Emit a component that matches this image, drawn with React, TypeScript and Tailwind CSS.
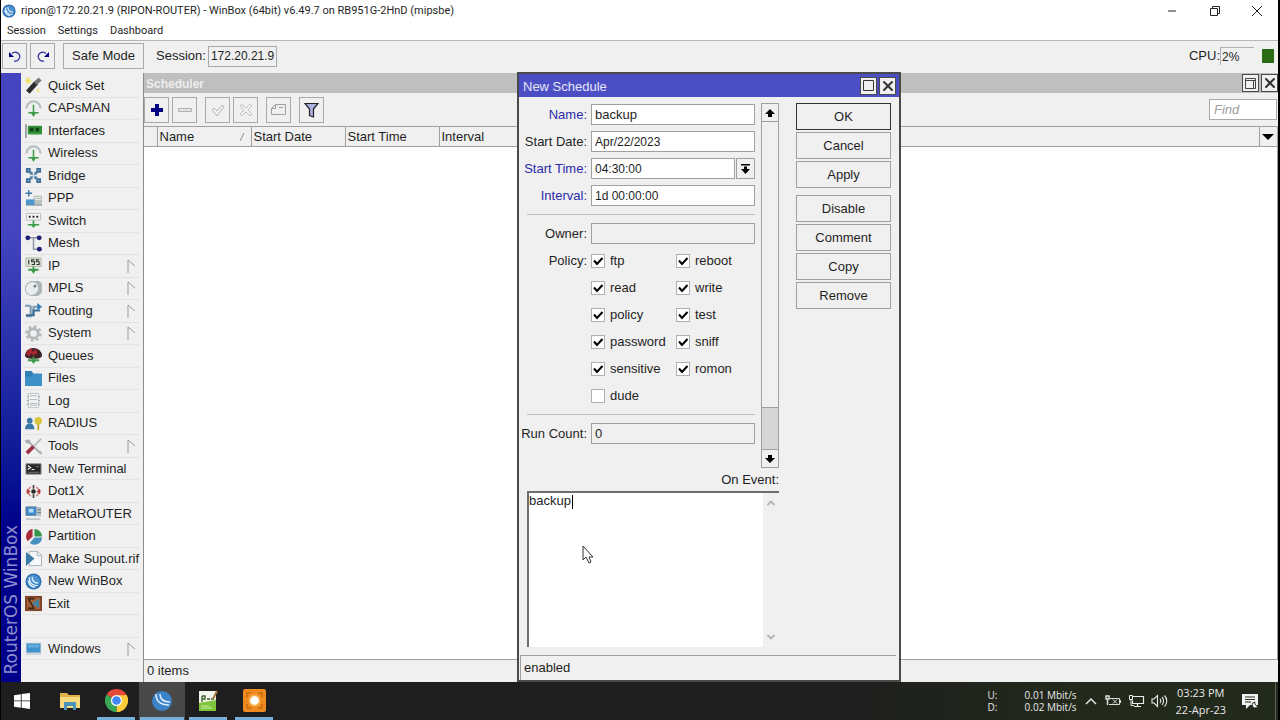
import type { ReactNode } from 'react';
import { ChevronDown, ChevronUp, Minus, X } from 'lucide-react';

const antenna = (
  <>
    <path d="M1.500 9a7.500 7.500 0 0 1 15 0" fill="none" stroke="#b9c0c4" strokeWidth="2.400" />
    <path d="M9 5v11M3.500 13.500h11" stroke="#3d9c47" strokeWidth="1.600" />
    <path d="M6 13l3 5 3-5z" fill="#3d9c47" />
  </>
);

const winboxBall = (
  <>
    <circle cx="9" cy="9" r="8.500" fill="#2f6fb0" />
    <circle cx="9" cy="9" r="6.800" fill="#4c92d2" />
    <path d="M4.500 4.500c0 6 3 9 9 9M7.500 4c0 4 2 6.500 6.500 6.800M3.500 8c.8 4 3 6.500 7 7" fill="none" stroke="#e8f3fc" strokeWidth="1.300" />
  </>
);

const icons: Record<string, ReactNode> = {
  'Quick Set': (
    <>
      <path d="M3 0v8M0 4h7M1 1l5 6M6 1L1 7" stroke="#ecdf4b" strokeWidth="1" />
      <path d="M3 16L12 6" stroke="#2c2c2c" strokeWidth="5" />
      <path d="M11 7l5-5" stroke="#777" strokeWidth="4.500" />
      <path d="M12 14l3 2M14 12v4" stroke="#ecdf4b" />
    </>
  ),
  CAPsMAN: antenna,
  Interfaces: (
    <>
      <path d="M1 2v15" stroke="#9aa29a" strokeWidth="2" />
      <path d="M3 4h15v9H3z" fill="#2f8f35" />
      <path d="M5 6h4v4H5zM11 6h4v4h-4z" fill="#12461a" />
      <path d="M5 13h10" stroke="#79c27c" strokeWidth="1" />
    </>
  ),
  Wireless: antenna,
  Bridge: (
    <>
      <path d="M2 2l14 14M16 2L2 16" stroke="#86a9c4" strokeWidth="2" />
      <path d="M1 1h5v5H1zM12 1h5v5h-5zM1 12h5v5H1zM12 12h5v5h-5z" fill="#3a6d98" />
      <path d="M5 5h3v3H5zM10 5h3v3h-3zM5 10h3v3H5zM10 10h3v3h-3z" fill="#4d81ab" />
      <path d="M3 3h1v1H3zM14 3h1v1h-1zM3 14h1v1H3zM14 14h1v1h-1zM8 8h2v2H8z" fill="#efefef" />
    </>
  ),
  PPP: (
    <>
      <path d="M4 0v7M.500 3.500h7" stroke="#3f78a5" strokeWidth="1.500" />
      <path d="M9 6h9v10H9z" fill="#b9c3ba" />
      <path d="M10 8h7M10 10h7" stroke="#e6eae6" />
      <path d="M1 10h9v6H1z" fill="#4b97d0" />
      <path d="M1 16h17" stroke="#7d8b95" />
    </>
  ),
  Switch: (
    <>
      <path d="M1.500 1.500h15v7h-15z" fill="#f7f7f7" stroke="#b7bdc0" />
      <path d="M4 5h2M8 5h2M12 5h2" stroke="#222" strokeWidth="2" />
      <path d="M9 9v7M3 13.500h12" stroke="#3d9c47" strokeWidth="1.800" />
      <path d="M6 13l3 4 3-4z" fill="#3d9c47" />
    </>
  ),
  Mesh: (
    <>
      <path d="M3 3h13M9 3v12h6" fill="none" stroke="#8e95a5" strokeWidth="1.600" />
      <g fill="#1c1f74">
        <circle cx="3" cy="3" r="2.600" />
        <circle cx="15" cy="3" r="2.600" />
        <circle cx="15.200" cy="15" r="2.600" />
      </g>
    </>
  ),
  IP: (
    <>
      <path d="M1 1h16v9H1z" fill="#e3ead9" stroke="#aab3a5" />
      <path d="M4 3v5M10 3H7v2h3v3H7M15 3h-3v2h3v3h-3" fill="none" stroke="#333" strokeWidth="1.200" />
      <path d="M9 10v6M3.500 13.500h11" stroke="#3d9c47" strokeWidth="2" />
      <path d="M6 13l3 5 3-5z" fill="#3d9c47" />
    </>
  ),
  MPLS: (
    <>
      <path d="M6 1h9l3 3v9l-4 4H6z" fill="#aab6b9" />
      <ellipse cx="7.500" cy="9" rx="7" ry="7.500" fill="#e8edee" stroke="#a8b2b5" transform="rotate(25 7.500 9)" />
      <circle cx="10.500" cy="6.500" r="1.500" fill="#6f7c80" />
    </>
  ),
  Routing: (
    <>
      <path d="M0 4h6M6 4v11H1M9 15V5h7" fill="none" stroke="#7a9aae" strokeWidth="2.200" />
      <path d="M1 14h8V9h7" fill="none" stroke="#3c6e95" strokeWidth="2.200" />
      <path d="M13 1l5 4-5 4z" fill="#2f7fb8" />
    </>
  ),
  System: (
    <>
      <circle cx="9" cy="9" r="5" fill="none" stroke="#b4b9bb" strokeWidth="3" />
      <circle cx="9" cy="9" r="7.500" fill="none" stroke="#b4b9bb" strokeWidth="2.500" strokeDasharray="3 2.890" />
    </>
  ),
  Queues: (
    <>
      <path d="M0 9a9 8 0 0 1 18 0c0 2-2 3.500-9 3.500S0 11 0 9z" fill="#3c2426" />
      <path d="M1 7c1-3 3-5 6-6l1 4 4-3 1 5-4 2-2-2-3 3z" fill="#a92732" />
      <path d="M9 10v6M3 14h12" stroke="#3d9c47" strokeWidth="2" />
      <path d="M6 14l3 4 3-4z" fill="#3d9c47" />
    </>
  ),
  Files: (
    <>
      <path d="M0 1h7l2 3h9v13H0z" fill="#2d7fb5" />
      <path d="M0 7h6l3-3h9v13H0z" fill="#3d91c6" />
    </>
  ),
  Log: (
    <>
      <path d="M3.500 1.500h11v15h-11z" fill="#f3f5f5" stroke="#bcc3c5" />
      <path d="M5 4h8M5 8h8M5 12h8M5 14h8" stroke="#a9b3b7" />
      <path d="M2 5h2M2 9h2M2 13h2M14 5h2M14 9h2M14 13h2" stroke="#9ba4a8" />
    </>
  ),
  RADIUS: (
    <>
      <circle cx="5" cy="6" r="3" fill="#3a78a6" />
      <path d="M0 15c0-4 2-6 5-6s5 2 5 6z" fill="#3a78a6" />
      <circle cx="14" cy="6" r="4" fill="#d9c63c" />
      <path d="M13 9h2v7h-2z" fill="#c1ac2c" />
    </>
  ),
  Tools: (
    <>
      <path d="M2 2l14 14" stroke="#a8adb0" strokeWidth="2.200" />
      <path d="M0 3l3 2 2-3M15 14l3 3" stroke="#a8adb0" strokeWidth="2" fill="none" />
      <path d="M17 1l-8 8" stroke="#b4b9bb" strokeWidth="1.800" />
      <path d="M9 9l-7 7" stroke="#a12f45" strokeWidth="4" />
    </>
  ),
  'New Terminal': (
    <>
      <path d="M1 4h16v11H1z" fill="#262626" stroke="#8d8d8d" />
      <path d="M3 6l3 2-3 2M7 10h3" fill="none" stroke="#fff" strokeWidth="1.200" />
      <path d="M3 13h12M11 7h4" stroke="#777" />
    </>
  ),
  Dot1X: (
    <>
      <path d="M6 4L2 9l4 5M12 4l4 5-4 5" fill="none" stroke="#d88b8b" strokeWidth="1.800" />
      <path d="M2 6l4 3-4 3zM16 6l-4 3 4 3z" fill="#b23b3b" />
      <circle cx="9" cy="9" r="2.400" fill="#252525" />
      <path d="M9 2v4M9 12v4" stroke="#444" strokeWidth="1.800" />
    </>
  ),
  MetaROUTER: (
    <>
      <path d="M1 2h11v9H1z" fill="#3a8bd0" stroke="#6e808e" />
      <path d="M4 4h5v4H4z" fill="#b5dbf5" />
      <path d="M12 2h5v10h-5z" fill="#b5c2ca" />
      <path d="M13 5h4M13 8h4" stroke="#55778e" />
      <path d="M1 15h15" stroke="#bec5c8" strokeWidth="2" />
    </>
  ),
  Partition: (
    <>
      <path d="M8 1v8l-5 5A8 8 0 0 1 8 1z" fill="#a72c3a" />
      <path d="M10 1a8 8 0 0 1 8 8h-8z" fill="#35964a" />
      <path d="M10 10h8a8 8 0 0 1-13 6z" fill="#4790c4" />
    </>
  ),
  'Make Supout.rif': (
    <>
      <path d="M4.500 1.500h9l4 4v11h-13z" fill="#f5f7f8" stroke="#a4b0b5" />
      <path d="M13 2v4h4" fill="none" stroke="#a4b0b5" />
      <path d="M1 2l9 7-9 8z" fill="#3a7ba9" />
    </>
  ),
  'New WinBox': winboxBall,
  Exit: (
    <>
      <path d="M0 1h18v16H0z" fill="#7d4426" />
      <path d="M2 3h14v12H2z" fill="#a85e35" />
      <path d="M3 4h7M3 14h7M4 5l5 8" stroke="#3b2418" strokeWidth="1.500" />
      <path d="M7 9l8-5v10z" fill="#41839c" />
    </>
  ),
  Windows: (
    <>
      <path d="M1.500 3.500h15v10h-15z" fill="#3f93cc" stroke="#8fb4cb" />
      <path d="M3 5h12v3H3z" fill="#64addc" />
      <path d="M1 15h16" stroke="#c2c8cb" />
    </>
  ),
};

const menuItems = [
  { name: 'Quick Set' },
  { name: 'CAPsMAN' },
  { name: 'Interfaces' },
  { name: 'Wireless' },
  { name: 'Bridge' },
  { name: 'PPP' },
  { name: 'Switch' },
  { name: 'Mesh' },
  { name: 'IP', sub: true },
  { name: 'MPLS', sub: true },
  { name: 'Routing', sub: true },
  { name: 'System', sub: true },
  { name: 'Queues' },
  { name: 'Files' },
  { name: 'Log' },
  { name: 'RADIUS' },
  { name: 'Tools', sub: true },
  { name: 'New Terminal' },
  { name: 'Dot1X' },
  { name: 'MetaROUTER' },
  { name: 'Partition' },
  { name: 'Make Supout.rif' },
  { name: 'New WinBox' },
  { name: 'Exit' },
  { name: '' },
  { name: 'Windows', sub: true },
];

const policies = [
  ['ftp', 'reboot'],
  ['read', 'write'],
  ['policy', 'test'],
  ['password', 'sniff'],
  ['sensitive', 'romon'],
  ['dude'],
];

function Sidebar() {
  return (
    <nav className="flex shrink-0 bg-[#f0f0f0] border-r border-[#8c8c8c]">
      <div className="w-5 bg-linear-to-b from-[#4545c0] from-25% to-[#00008a] to-75% flex items-end justify-center pb-2">
        <span className="[writing-mode:vertical-rl] rotate-180 font-['DejaVu_Sans'] text-[17px] leading-5 text-[#8d8dcf] whitespace-nowrap">
          RouterOS WinBox
        </span>
      </div>
      <ul className="w-[122px] pl-0.5 pr-1 pt-0.5 flex flex-col">
        {menuItems.map((item, i) => (
          <li key={i} className="flex-1 min-h-0 border-b border-[#e2e2e2]">
            {item.name && (
              <button className="w-full h-full flex items-center gap-1.5 pl-0.5 text-left whitespace-nowrap">
                <svg viewBox="0 0 18 18" className="w-[17px] h-[17px] shrink-0">{icons[item.name]}</svg>
                <span className="flex-1">{item.name}</span>
                {item.sub && (
                  <svg viewBox="0 0 8 14" className="w-2 h-3.5 mr-1" fill="none">
                    <path d="M1 14V1l7 6" stroke="#9b9b9b" />
                  </svg>
                )}
              </button>
            )}
          </li>
        ))}
        <li className="flex-1" />
      </ul>
    </nav>
  );
}

function ToolButton({ label, className = '', children }: { label: string; className?: string; children: ReactNode }) {
  return (
    <button aria-label={label} className={`w-[25px] h-[26px] border border-[#a9a9a9] flex items-center justify-center ${className}`}>
      {children}
    </button>
  );
}

function FrameButton({ label, children }: { label: string; children: ReactNode }) {
  return (
    <button aria-label={label} className="w-[17px] h-[18px] bg-[#f0f0f0] border border-[#4a4a4a] flex items-center justify-center text-[#333]">
      {children}
    </button>
  );
}

function SchedulerWindow() {
  return (
    <section className="flex-1 min-w-0 flex flex-col bg-[#f0f0f0]">
      <div className="h-5 shrink-0 bg-[#bfbfbf] flex items-center justify-between pl-0.5">
        <h2 className="pt-0.5 font-bold text-xs text-[#ededed]">Scheduler</h2>
        <div className="flex gap-0.5">
          <FrameButton label="Maximize">
            <svg viewBox="0 0 13 13" className="w-[13px] h-[13px]" fill="none" stroke="#444">
              <path d="M1.500 1.500h10v10h-10zM1.500 3.500h10M9.500 3.500v8" />
            </svg>
          </FrameButton>
          <FrameButton label="Close">
            <X className="w-4 h-4 shrink-0" strokeWidth={3} />
          </FrameButton>
        </div>
      </div>

      <div className="h-[33px] shrink-0 flex items-center justify-between pr-px">
        <div className="flex">
          <ToolButton label="Add">
            <svg viewBox="0 0 14 14" className="w-3.5 h-3.5">
              <path d="M5 1h4v4h4v4H9v4H5V9H1V5h4z" fill="#000080" />
            </svg>
          </ToolButton>
          <ToolButton label="Remove" className="ml-[3px]">
            <svg viewBox="0 0 14 14" className="w-3.5 h-3.5">
              <path d="M.500 5.500h13v3H.500z" fill="#e4e4e4" stroke="#b0b0b0" />
            </svg>
          </ToolButton>
          <ToolButton label="Enable" className="ml-2">
            <svg viewBox="0 0 14 14" className="w-3.5 h-3.5">
              <path d="M1 7l2-2 3 3 5-6 2 2-7 9z" fill="none" stroke="#b5b5b5" />
            </svg>
          </ToolButton>
          <ToolButton label="Disable" className="ml-[3px]">
            <svg viewBox="0 0 14 14" className="w-3.5 h-3.5">
              <path d="M1 3l2-2 4 4 4-4 2 2-4 4 4 4-2 2-4-4-4 4-2-2 4-4z" fill="none" stroke="#b5b5b5" strokeDasharray="3 1" />
            </svg>
          </ToolButton>
          <ToolButton label="Comment" className="ml-2">
            <svg viewBox="0 0 15 13" className="w-[15px] h-[13px]">
              <path d="M4.500 1.500h10v10H.500v-6zM4.500 1.500v4h-4M8 4.500h4" fill="none" stroke="#a0a0a0" />
            </svg>
          </ToolButton>
          <ToolButton label="Filter" className="ml-2">
            <svg viewBox="0 0 15 16" className="w-[15px] h-4">
              <path d="M1 1.500h13L9.500 7v8l-4-1.500V7z" fill="#aab0e0" stroke="#222" strokeWidth="1.200" />
            </svg>
          </ToolButton>
        </div>
        <input
          aria-label="Find"
          placeholder="Find"
          className="w-[68px] h-[21px] bg-white border border-[#a9a9a9] px-1 italic placeholder:text-[#a0a0a0] outline-none"
        />
      </div>

      <div className="flex-1 min-h-0 bg-white border-r border-[#a0a0a0]">
        <table className="w-full table-fixed border-collapse">
          <colgroup>
            <col className="w-[13px]" />
            <col className="w-[94px]" />
            <col className="w-[94px]" />
            <col className="w-[94px]" />
            <col />
            <col className="w-[18px]" />
          </colgroup>
          <thead>
            <tr className="h-5 bg-[#f0f0f0] border-y border-[#a0a0a0] text-left">
              <th className="border-r border-[#a0a0a0]" />
              <th className="font-normal border-r border-[#a0a0a0] px-0.5">
                <span className="flex items-center justify-between">
                  Name
                  <svg viewBox="0 0 6 8" className="w-1.5 h-2 mr-1">
                    <path d="M1 8l4-8" stroke="#8a8a8a" />
                  </svg>
                </span>
              </th>
              <th className="font-normal border-r border-[#a0a0a0] px-0.5">Start Date</th>
              <th className="font-normal border-r border-[#a0a0a0] px-0.5">Start Time</th>
              <th className="font-normal border-r border-[#a0a0a0] px-0.5">Interval</th>
              <th className="font-normal">
                <button aria-label="Columns" className="w-full flex justify-center">
                  <svg viewBox="0 0 12 6" className="w-3 h-1.5">
                    <path d="M0 0h12L6 6z" fill="#000" />
                  </svg>
                </button>
              </th>
            </tr>
          </thead>
          <tbody />
        </table>
      </div>
      <div className="h-[23px] shrink-0 border-t border-[#a0a0a0] flex items-center pl-[3px]">0 items</div>
    </section>
  );
}

function Field({ id, label, value, changed, numeric, readOnly, children }: {
  id: string;
  label: string;
  value: string;
  changed?: boolean;
  numeric?: boolean;
  readOnly?: boolean;
  children?: ReactNode;
}) {
  return (
    <div className="h-[21px] flex items-center gap-1">
      <label htmlFor={id} className={`w-[60px] flex justify-end whitespace-nowrap ${changed ? 'text-[#2a2aa8]' : ''}`}>
        {label}
      </label>
      <input
        id={id}
        defaultValue={value}
        readOnly={readOnly}
        className={`flex-1 min-w-0 h-full px-[3px] border border-[#a0a0a0] outline-none ${readOnly ? 'bg-[#f0f0f0]' : 'bg-white'} ${numeric ? 'text-xs' : ''}`}
      />
      {children}
    </div>
  );
}

function PolicyCheck({ name }: { name: string }) {
  return (
    <label className="flex items-center gap-[5px]">
      <span className="grid">
        <input
          type="checkbox"
          defaultChecked={name !== 'dude'}
          className="peer col-start-1 row-start-1 appearance-none w-3.5 h-3.5 bg-white border border-[#b0b0b0]"
        />
        <svg viewBox="0 0 14 14" className="col-start-1 row-start-1 w-3.5 h-3.5 pointer-events-none invisible peer-checked:visible" fill="none">
          <path d="M3 6.500l3 3.500 5.500-6" stroke="#000" strokeWidth="2" />
        </svg>
      </span>
      {name}
    </label>
  );
}

function ScrollArrow({ label, down }: { label: string; down?: boolean }) {
  return (
    <button aria-label={label} className={`h-[18px] flex items-center justify-center border-[#a0a0a0] ${down ? 'border-t' : 'border-b'}`}>
      <svg viewBox="0 0 10 10" className={`w-2.5 h-2.5 ${down ? 'rotate-180' : ''}`}>
        <path d="M5 1l5 5H7v3H3V6H0z" fill="#000" />
      </svg>
    </button>
  );
}

function ActionButton({ children, primary, className = '' }: { children: string; primary?: boolean; className?: string }) {
  return (
    <button className={`h-[27px] border ${primary ? 'border-[#333]' : 'border-[#a0a0a0]'} ${className}`}>{children}</button>
  );
}

function ScheduleDialog() {
  return (
    <section className="absolute left-[373px] -top-px bottom-0 w-96 flex flex-col bg-[#f0f0f0] border-2 border-[#4a4a4a]">
      <div className="h-[23px] shrink-0 bg-[#4c4fc4] flex items-center justify-between pl-1 pr-[3px]">
        <h2 className="pt-0.5 text-[#e6e6fa]">New Schedule</h2>
        <div className="flex gap-0.5">
          <FrameButton label="Maximize dialog">
            <svg viewBox="0 0 13 13" className="w-[13px] h-[13px]" fill="none" stroke="#333">
              <path d="M1.500 1.500h10v10h-10z" />
            </svg>
          </FrameButton>
          <FrameButton label="Close dialog">
            <X className="w-4 h-4 shrink-0" strokeWidth={3} />
          </FrameButton>
        </div>
      </div>

      <div className="flex-1 min-h-0 flex px-2 pt-1.5 gap-[17px]">
        <div className="flex-1 min-w-0 flex flex-col">
          <div className="flex gap-1.5">
            <form className="flex-1 min-w-0 flex flex-col gap-1.5 pt-px pb-6">
              <Field id="name" label="Name:" value="backup" changed />
              <Field id="start-date" label="Start Date:" value="Apr/22/2023" numeric />
              <Field id="start-time" label="Start Time:" value="04:30:00" changed numeric>
                <button type="button" aria-label="Time presets" className="w-[19px] h-full -ml-[3px] border border-[#a0a0a0] flex items-center justify-center">
                  <svg viewBox="0 0 9 10" className="w-[9px] h-2.5">
                    <path d="M0 0h9v1.500H0zM3 2.500h3V5h3L4.500 10 0 5h3z" fill="#000" />
                  </svg>
                </button>
              </Field>
              <Field id="interval" label="Interval:" value="1d 00:00:00" changed numeric />
              <hr className="my-0.5 border-[#bdbdbd]" />
              <Field id="owner" label="Owner:" value="" readOnly />
              <fieldset className="flex gap-1">
                <div className="w-[60px] h-[21px] flex items-center justify-end">Policy:</div>
                <div className="flex-1 flex flex-col gap-1.5">
                  {policies.map((row) => (
                    <div key={row[0]} className="h-[21px] grid grid-cols-[85px_1fr] items-center">
                      {row.map((name) => (
                        <PolicyCheck key={name} name={name} />
                      ))}
                    </div>
                  ))}
                </div>
              </fieldset>
              <hr className="my-0.5 border-[#bdbdbd]" />
              <Field id="run-count" label="Run Count:" value="0" readOnly />
            </form>
            <div className="w-[18px] flex flex-col border border-[#a0a0a0]">
              <ScrollArrow label="Scroll up" />
              <div className="flex-1" />
              <div className="h-[42px] bg-[#d6d6d6] border-t border-[#a0a0a0]" />
              <ScrollArrow label="Scroll down" down />
            </div>
          </div>

          <label htmlFor="on-event" className="h-[23px] flex items-center justify-end">On Event:</label>
          <div className="relative flex-1 flex bg-white border-t-2 border-l-2 border-[#6e6e6e]">
            <textarea
              id="on-event"
              defaultValue="backup"
              spellCheck={false}
              className="flex-1 min-w-0 resize-none outline-none overflow-hidden"
            />
            <div className="w-4 bg-[#f0f0f0] flex flex-col items-center justify-between py-1 text-[#b5b5b5]">
              <ChevronUp className="w-3 h-3" strokeWidth={4} />
              <ChevronDown className="w-3 h-3" strokeWidth={4} />
            </div>
            {/* caret and pointer */}
            <i className="absolute left-[43px] top-0.5 w-px h-3.5 bg-black" />
            <svg viewBox="0 0 12 19" className="absolute left-[53px] top-[52px] w-3 h-[19px]">
              <path d="M1 1v14l3-3 3 6 2-1-2-5h4z" fill="#fff" stroke="#333" />
            </svg>
          </div>
        </div>

        <div className="w-[95px] flex flex-col gap-0.5">
          <ActionButton primary>OK</ActionButton>
          <ActionButton>Cancel</ActionButton>
          <ActionButton>Apply</ActionButton>
          <ActionButton className="mt-[5px]">Disable</ActionButton>
          <ActionButton>Comment</ActionButton>
          <ActionButton>Copy</ActionButton>
          <ActionButton>Remove</ActionButton>
        </div>
      </div>

      <div className="h-[25px] shrink-0 mt-2 ml-px mr-[3px] border-t border-l border-[#a0a0a0] flex items-center pl-[3px]">enabled</div>
    </section>
  );
}

function TaskButton({ label, running, active, children }: { label: string; running?: boolean; active?: boolean; children: ReactNode }) {
  return (
    <button aria-label={label} className={`w-[46px] h-full px-px flex flex-col items-center ${active ? 'bg-[#484848]' : ''}`}>
      <span className="flex-1 pt-0.5 flex items-center">{children}</span>
      <span className={`h-[3px] ${active ? 'w-full' : 'w-[38px]'} ${running ? 'bg-[#76b0d8]' : ''}`} />
    </button>
  );
}

function Taskbar() {
  return (
    <footer className="h-[38px] shrink-0 flex justify-between bg-linear-to-r from-[#1e1e1e] from-65% to-[#222a1b] to-85% text-[#e8e8e8] font-['Open_Sans',sans-serif]">
      <div className="flex">
        <TaskButton label="Start">
          <svg viewBox="0 0 16 16" className="w-4 h-4 mr-1" fill="#fff">
            <path d="M0 2.200l6.800-1v6.300H0zM7.600 1.100L16 0v7.500H7.600zM0 8.300h6.800v6.400L0 13.800zM7.600 8.300H16V16l-8.400-1.200z" />
          </svg>
        </TaskButton>
        <TaskButton label="File Explorer">
          <svg viewBox="0 0 20 18" className="w-5 h-[18px]">
            <path d="M0 1h7l2 2h11v13H0z" fill="#e0b14a" />
            <path d="M0 5h20v11H0z" fill="#f7da7d" />
            <path d="M4 10h12v8h-3v-4H7v4H4z" fill="#4a93b9" />
          </svg>
        </TaskButton>
        <TaskButton label="Chrome" running>
          <svg viewBox="0 0 48 48" className="w-[23px] h-[23px]">
            <path d="M24 24L3.200 12A24 24 0 0 1 44.800 12z" fill="#e5493a" />
            <path d="M24 24L44.800 12A24 24 0 0 1 24 48z" fill="#fbcb3a" />
            <path d="M24 24v24A24 24 0 0 1 3.200 12z" fill="#3aa757" />
            <path d="M24 13h20.800A24 24 0 0 1 24 48l9.500-18z" fill="#fbcb3a" />
            <circle cx="24" cy="24" r="11.500" fill="#fff" />
            <circle cx="24" cy="24" r="9" fill="#4285f4" />
          </svg>
        </TaskButton>
        <TaskButton label="WinBox" running active>
          <svg viewBox="0 0 20 20" className="w-5 h-5">
            <circle cx="10" cy="10" r="10" fill="#3b82c9" />
            <path d="M4 3c0 7 4 11 13 11M8 3c0 5 3 8 10 8" fill="none" stroke="#e2effa" strokeWidth="1.500" />
          </svg>
        </TaskButton>
        <TaskButton label="Notepad++" running>
          <svg viewBox="0 0 20 22" className="w-5 h-[22px]">
            <path d="M1 1h17v20H1z" fill="#f1f5ec" />
            <path d="M1 13l17-3v11H1z" fill="#7fc43a" />
            <path d="M4 6v6M4 6h3v3H4M9 9h3M13 9h3" fill="none" stroke="#39602a" strokeWidth="1.300" />
            <path d="M19 1l-4 8" stroke="#a5763c" strokeWidth="2" />
            <path d="M3 16h8M3 18h11" stroke="#c9ec9d" />
          </svg>
        </TaskButton>
        <TaskButton label="Screen recorder" running>
          <svg viewBox="0 0 23 23" className="w-[23px] h-[23px]">
            <rect width="23" height="23" rx="2" fill="#ee8a1f" />
            <path d="M4 8V4h4M15 4h4v4M19 15v4h-4M8 19H4v-4" fill="none" stroke="#c96b0d" strokeWidth="1.500" />
            <circle cx="11.500" cy="11.500" r="6" fill="#f8b254" />
            <circle cx="11.500" cy="11.500" r="4.300" fill="#fff" />
          </svg>
        </TaskButton>
      </div>

      <div className="flex items-center pr-0.5">
        <dl className="grid grid-cols-[37px_auto] text-[10px] leading-3">
          <dt>U:</dt>
          <dd>0.01 Mbit/s</dd>
          <dt>D:</dt>
          <dd>0.02 Mbit/s</dd>
        </dl>
        <svg viewBox="0 0 12 8" className="w-3 h-2 ml-2" fill="none">
          <path d="M1 7l5-5 5 5" stroke="#eee" strokeWidth="1.400" />
        </svg>
        <svg viewBox="0 0 17 12" className="w-[17px] h-3 ml-2" fill="none" stroke="#ddd">
          <path d="M5 3.500h9.500v6H4M15.500 5v3M8 4.500l4 4M12 4.500l-4 4" />
          <path d="M1 1h3v3H1zM2.500 4v6" strokeWidth="1.500" />
        </svg>
        <svg viewBox="0 0 17 14" className="w-[17px] h-3.5 ml-1.5" fill="none" stroke="#e8e8e8">
          <path d="M5 2.500h10.500v7H4.500v-3M9.500 9.500v3M6 12.500h7" strokeWidth="1.200" />
          <path d="M1.500 1.500h3v4h-3zM3 5.500v6h3" />
        </svg>
        <svg viewBox="0 0 17 14" className="w-[17px] h-3.5 ml-1.5" fill="none" stroke="#e8e8e8">
          <path d="M1 5h2l3.500-3.500v11L3 9H1zM9 5c1 1 1 3 0 4M11 3c2 2 2 6 0 8M13.500 1.500c3 3 3 8 0 11" strokeWidth="1.100" />
        </svg>
        <div className="ml-2 text-[11px] leading-[17px] text-center whitespace-nowrap">
          <div>03:23 PM</div>
          <div>22-Apr-23</div>
        </div>
        <svg viewBox="0 0 17 17" className="w-[17px] h-[17px] ml-4">
          <path d="M0 1h16v11H8l-4 4v-4H0z" fill="#f2f2f2" />
          <path d="M3 4h10M3 6.500h10M3 9h6" stroke="#2a3022" strokeWidth="1.200" />
          <path d="M13 9a3 3 0 1 0 3 4 3 3 0 0 1-3-4z" fill="#f2f2f2" stroke="#2a3022" />
        </svg>
        <div className="w-px h-full bg-[#5a6152] ml-4" />
      </div>
    </footer>
  );
}

export default function App() {
  return (
    <div className="h-screen flex flex-col overflow-hidden bg-white border-l border-r-2 border-black text-[13px] leading-4 text-[#1f1f1f] font-['Liberation_Sans',Arial,sans-serif]">
      <header className="h-[22px] shrink-0 flex items-center justify-between pl-px font-['Roboto',sans-serif] text-[11px]">
        <div className="flex items-center gap-[5px]">
          <svg viewBox="0 0 18 18" className="w-3.5 h-3.5">{winboxBall}</svg>
          <h1>ripon@172.20.21.9 (RIPON-ROUTER) - WinBox (64bit) v6.49.7 on RB951G-2HnD (mipsbe)</h1>
        </div>
        <div className="flex items-center gap-8 pr-4">
          <button aria-label="Minimize window">
            <Minus className="w-3 h-3" strokeWidth={2} />
          </button>
          <button aria-label="Restore window">
            <svg viewBox="0 0 10 10" className="w-2.5 h-2.5" fill="none" stroke="#222">
              <path d="M.500 2.500h7v7h-7zM2.500 2V.500h7v7H8" />
            </svg>
          </button>
          <button aria-label="Close window">
            <svg viewBox="0 0 10 10" className="w-2.5 h-2.5" stroke="#222">
              <path d="M0 0l10 10M10 0L0 10" />
            </svg>
          </button>
        </div>
      </header>

      <nav className="h-[19px] shrink-0 flex items-center gap-3 pl-1.5 border-b border-[#b5b5b5] font-['Roboto',sans-serif] text-[11px]">
        <button>Session</button>
        <button>Settings</button>
        <button>Dashboard</button>
      </nav>

      <div className="h-8 shrink-0 flex items-center bg-[#f0f0f0] pl-px pb-1 pt-0.5">
        <ToolButton label="Undo">
          <svg viewBox="0 0 14 14" className="w-3.5 h-3.5" fill="none">
            <path d="M4 4.500a4.500 4.500 0 1 1 2 7.500" stroke="#2a2a9a" strokeWidth="1.200" />
            <path d="M1 3v5h5z" fill="#000080" />
          </svg>
        </ToolButton>
        <ToolButton label="Redo" className="ml-[3px]">
          <svg viewBox="0 0 14 14" className="w-3.5 h-3.5" fill="none">
            <path d="M10 4.500a4.500 4.500 0 1 0-2 7.500" stroke="#2a2a9a" strokeWidth="1.200" />
            <path d="M13 3v5H8z" fill="#000080" />
          </svg>
        </ToolButton>
        <button className="w-[81px] h-[26px] ml-2 border border-[#a9a9a9]">Safe Mode</button>
        <span className="ml-3">Session:</span>
        <span className="ml-0.5 h-[21px] px-0.5 flex items-center border border-[#a9a9a9] text-xs">172.20.21.9</span>
        <span className="ml-auto">CPU:</span>
        <span className="w-[34px] h-[18px] pl-px border-t border-l border-[#b0b0b0] flex items-center text-xs">2%</span>
        <span className="w-3 h-3.5 ml-2 mr-1 bg-[#2c6b14]" />
      </div>

      <main className="flex-1 min-h-0 flex bg-[#f0f0f0]">
        <Sidebar />
        <div className="relative flex-1 min-w-0 flex">
          <SchedulerWindow />
          <ScheduleDialog />
        </div>
      </main>

      <Taskbar />
    </div>
  );
}
